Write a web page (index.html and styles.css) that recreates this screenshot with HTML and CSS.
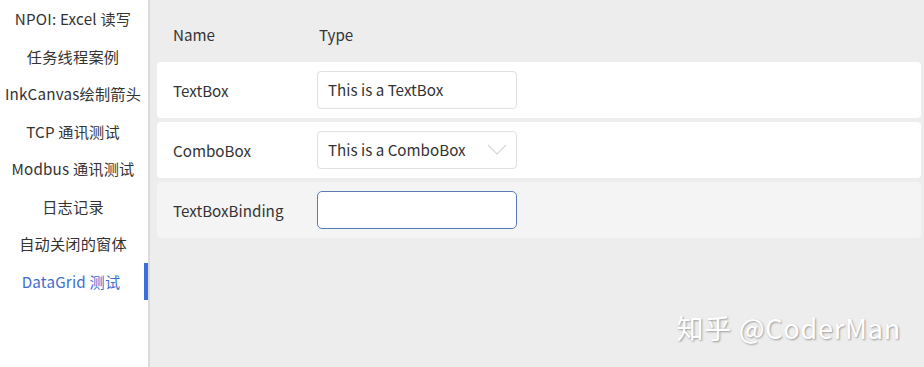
FILE: index.html
```html
<!DOCTYPE html>
<html lang="zh-CN">
<head>
    <meta charset="UTF-8">
    <title>DataGrid 测试</title>
    <link rel="stylesheet" href="styles.css">
</head>
<body>

    <!-- Sidebar -->
    <div class="sidebar">
        <a class="nav-item">NPOI: Excel 读写</a>
        <a class="nav-item">任务线程案例</a>
        <a class="nav-item">InkCanvas绘制箭头</a>
        <a class="nav-item">TCP 通讯测试</a>
        <a class="nav-item">Modbus 通讯测试</a>
        <a class="nav-item">日志记录</a>
        <a class="nav-item">自动关闭的窗体</a>
        <a class="nav-item active">DataGrid 测试</a>
    </div>

    <!-- Main -->
    <div class="main">
        <div class="grid-header">
            <span class="col-name">Name</span>
            <span class="col-type">Type</span>
        </div>

        <div class="grid-row">
            <span class="col-name">TextBox</span>
            <div class="field">This is a TextBox</div>
        </div>

        <div class="grid-row">
            <span class="col-name">ComboBox</span>
            <div class="field combo">
                This is a ComboBox
                <svg class="arrow" width="20" height="12" viewBox="0 0 20 12">
                    <path d="M1 1 L10 10 L19 1" fill="none" stroke="#d6d6d6" stroke-width="1.2"/>
                </svg>
            </div>
        </div>

        <div class="grid-row alt">
            <span class="col-name">TextBoxBinding</span>
            <div class="field focus"></div>
        </div>

        <div class="watermark">知乎 @CoderMan</div>
    </div>

</body>
</html>
```

FILE: styles.css
```css
/* General */
* {
    margin: 0;
    padding: 0;
    box-sizing: border-box;
}
body {
    display: flex;
    width: 924px;
    height: 367px;
    overflow: hidden;
    font-family: "Noto Sans CJK SC", "Noto Sans", sans-serif;
    font-size: 15.2px;
    color: #333333;
    background: #ededed;
}

/* Sidebar */
.sidebar {
    width: 150px;
    flex-shrink: 0;
    background: #ffffff;
    border-right: 2px solid #dcdcdc;
    display: flex;
    flex-direction: column;
    padding-top: 0;
}
.nav-item {
    height: 37.5px;
    line-height: 36px;
    text-align: center;
    white-space: nowrap;
    color: #333333;
    margin-right: 2px;
    letter-spacing: 0.2px;
}
.nav-item.active {
    color: #3f6dcc;
    border-right: 4px solid #3b6fdb;
    margin-right: 0;
    padding-right: 2px;
}

/* Main area */
.main {
    position: relative;
    flex: 1;
    padding: 15px 3px 0 7px;
}
.grid-header {
    display: flex;
    align-items: center;
    height: 38px;
    padding-left: 16px;
    margin-bottom: 9px;
}
.col-name {
    width: 146px;
}
.grid-row {
    display: flex;
    align-items: center;
    height: 56px;
    padding-left: 16px;
    margin-bottom: 4px;
    background: #ffffff;
    border-radius: 4px;
}
.grid-row.alt {
    background: #f4f4f4;
}
.grid-row .col-name {
    width: 144px;
}

/* Inputs */
.field {
    position: relative;
    width: 200px;
    height: 38px;
    line-height: 35px;
    padding-left: 10px;
    border: 1px solid #e0e0e0;
    border-radius: 4px;
    background: #ffffff;
}
.field.focus {
    border-color: #5a7cb3;
    border-radius: 5px;
}
.arrow {
    position: absolute;
    right: 9px;
    top: 12px;
}

/* Watermark */
.watermark {
    position: absolute;
    right: 23px;
    bottom: 20px;
    font-size: 27px;
    color: #ffffff;
    text-shadow: 1px 1px 2px #9a9a9a;
    letter-spacing: 0.8px;
}
```
